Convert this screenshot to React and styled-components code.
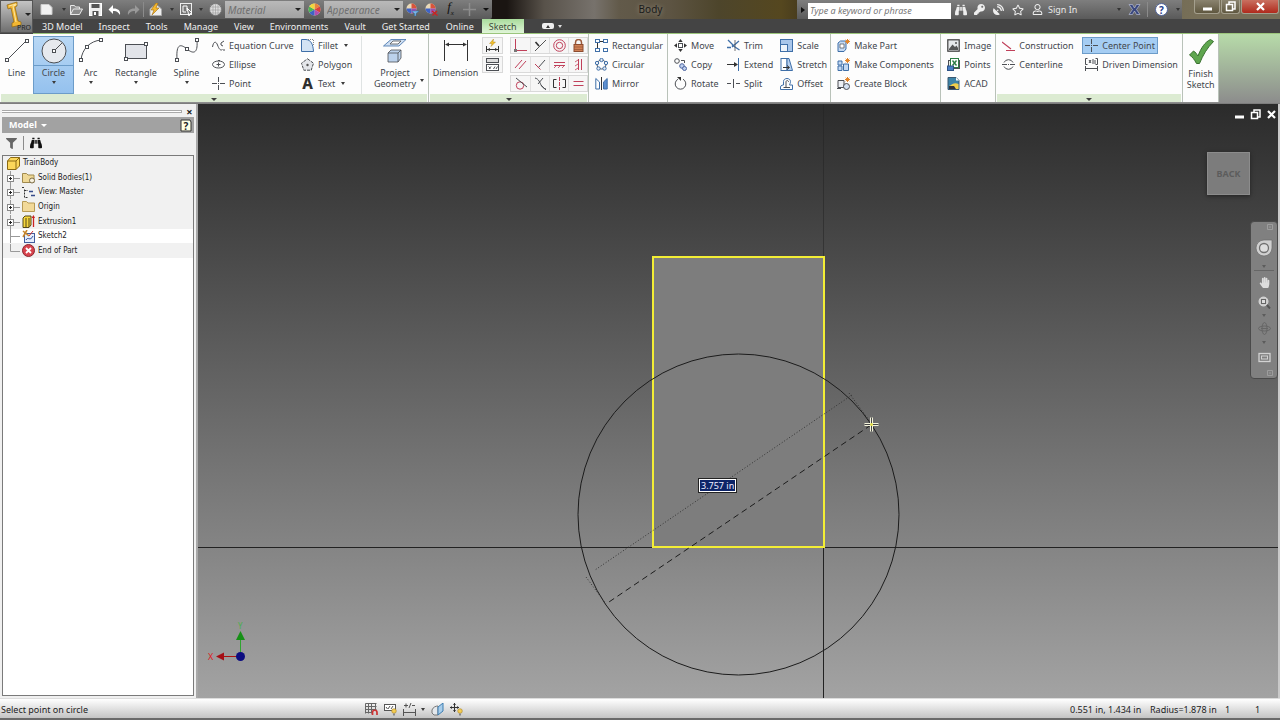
import React, { useState } from 'react'
import styled, { createGlobalStyle, css } from 'styled-components'
import { FaBinoculars, FaFilter, FaHandPaper, FaKey, FaRegStar, FaRegUser, FaSatelliteDish } from 'react-icons/fa'

const ink = '#4c4f54'
const blue = '#3f6fa8'
const red = '#c0405a'

// every drawing is [width, height, content]
const icons = {
  line: [26, 26, <g fill='#fff' stroke={ink}><path d='M4 21 22 3' /><rect x='1.5' y='20.5' width='3' height='3' /><rect x='21.5' y='1.5' width='3' height='3' /></g>],
  circle: [26, 26, <g fill='#fff' stroke={ink}><circle cx='13' cy='13' r='12' fill='#e6e9ee' /><path d='m13 13 8-8' /><rect x='11.5' y='11.5' width='3' height='3' /></g>],
  arc: [26, 26, <g fill='#fff' stroke={ink}><path d='M3 22C4 11 12 3 23 2' fill='none' /><rect x='1.5' y='20.5' width='3' height='3' /><rect x='7.5' y='7.5' width='3' height='3' /><rect x='21.5' y='.5' width='3' height='3' /></g>],
  rectangle: [26, 26, <g fill='#fff' stroke={ink}><rect x='2.5' y='6.5' width='21' height='14' fill='#e2e4e9' /><rect x='1.5' y='19.5' width='3' height='3' /><rect x='21.5' y='4.5' width='3' height='3' /></g>],
  spline: [26, 26, <g fill='#fff' stroke={ink}><path d='M3 21C2 5 7 6 13 11S24 16 23 3' fill='none' /><rect x='1.5' y='20.5' width='3' height='3' /><rect x='11.5' y='9.5' width='3' height='3' /><rect x='21.5' y='.5' width='3' height='3' /></g>],
  project: [26, 26, <g stroke={ink} strokeWidth='.8'><path d='M1.500 8 9 1.500h15L17 8z' fill='#cfdff2' stroke={blue} /><path d='m8 6 3-3h8l-3 3z' fill='#fff' /><path d='m6 15 3-3h10v8l-3 4H6z' fill='#bcd2ec' /><path d='M6 15h10v9M16 15l3-3' fill='none' /></g>],
  dimension: [26, 26, <g stroke='#333' fill='#333'><path d='M1.500 2v21M24.500 2v21M3 6.500h20' /><path d='m2 6.500 4-2v4zM24 6.500l-4-2v4z' stroke='none' /></g>],
  check: [28, 27, <path d='M2.500 17 6.500 13c2 1 3 3 4.500 5C14 10 18 4 23.500 1.500l3 2C20 10 16 17 12.500 25.500h-3C7.500 21.500 5 18.500 2.500 17z' fill='#5fa64f' stroke='#39702f' />],
  equation: [13, 13, <g fill='none' stroke={ink}><path d='M.5 8C1.500 2 4 2 5.500 6s3 6 5 4.500' /><path d='M12 2 9 4v2l2 1M12 10v2' /></g>],
  ellipse: [13, 13, <g fill='none' stroke={ink}><ellipse cx='6.500' cy='6.500' rx='6' ry='3.500' /><path d='M4.500 6.500h4M6.500 4.500v4M6 2.500h2' /></g>],
  point: [13, 13, <path d='M0 6.500h5M8 6.500h5M6.500 0v5M6.500 8v5M6 6.500h1' stroke={ink} />],
  fillet: [13, 13, <g><path d='M.5.5H5C10 1 12 5 12.500 12.500H.5z' fill='#d3e3f4' stroke={blue} /><path d='M7 .5h5.500V6' fill='none' stroke='#888' strokeDasharray='1 1' /></g>],
  polygon: [13, 13, <g><path d='m6.500.8 6 4.400-2.300 7H2.800l-2.300-7z' fill='#e4e6ea' stroke={ink} strokeDasharray='3 1' /><circle cx='6.500' cy='7' r='1.200' fill='#555' /></g>],
  text: [13, 13, <path d='M2 12.500 6.500 1.500l4.500 11M4 8.500h5' fill='none' stroke='#2e2e2e' strokeWidth='2' />],
  autoDim: [13, 13, <g><path d='m7.500 0-4 4.500h2.500L5 7.500l4.500-4.500H7z' fill='#f3c12b' stroke='#a97b10' strokeWidth='.4' /><path d='M.5 7v6M12.500 7v6M1 10.500h11' stroke='#333' /><path d='m1 10.500 3-1.500v3zM12 10.500 9 9v3z' fill='#333' /></g>],
  showCon: [13, 13, <g fill='#ddd' stroke={ink}><rect x='.5' y='.5' width='12' height='4' /><rect x='.5' y='6.500' width='12' height='6' fill='#fff' /><path d='m2.500 8.500 2 2M5 8.500l-2 2.500M7.500 11l1.500-2.500M10 11l1.500-2.500' /></g>],
  coincident: [13, 13, <g><path d='M1.500 0v11.500H13' fill='none' stroke={red} /><path d='M0 10h3v3H0z' fill='#777' /></g>],
  collinear: [13, 13, <g fill='none' stroke={ink}><path d='M1 12 12 1' stroke='#555' /><path d='m1.500 3 3.500 4' stroke='#333' strokeWidth='1.600' /></g>],
  concentric: [13, 13, <g fill='none' stroke={red}><circle cx='6.500' cy='6.500' r='5.800' /><circle cx='6.500' cy='6.500' r='3.200' /></g>],
  fix: [13, 13, <g><path d='M3.500 6V3.500a3 3 0 0 1 6 0V6' fill='none' stroke='#9b5b3c' strokeWidth='1.500' /><rect x='2' y='5.500' width='9' height='7' fill='#d08055' stroke='#8c4c30' /><path d='M2 8h9M2 10.500h9' stroke='#8c4c30' strokeWidth='.6' /></g>],
  parallel: [13, 13, <path d='M1 10 8 2M5 11l7-8' stroke={red} />],
  perpendicular: [13, 13, <g fill='none'><path d='m4 10 7-8' stroke={ink} /><path d='m1 6 5.500 5.500' stroke={red} /></g>],
  horizontal: [13, 13, <g stroke={red}><path d='M1 4.500h11M1 7.500h11' /><path d='m1 10 2-2M5 10l2-2M9 10l2-2' strokeWidth='.8' /></g>],
  vertical: [13, 13, <g stroke={red}><path d='M6.500 1v11M9.500 1v11' /><path d='m3 4 3-2M3 8l3-2M3 12l3-2' strokeWidth='.8' /></g>],
  tangent: [13, 13, <g fill='none'><circle cx='6' cy='8.500' r='3.700' stroke={red} /><path d='m2 1 11 9' stroke={ink} /></g>],
  smooth: [13, 13, <path d='M1 1c4 1 5 5 6 7s3 4 5 4M4 7l5-6M7 8l5 5' fill='none' stroke={ink} />],
  symmetric: [13, 13, <g fill='none'><path d='M3.500 2.500h-3v8h3M9.500 2.500h3v8h-3' stroke='#333' /><path d='M6.500 0v13' stroke={red} strokeDasharray='4 1' /></g>],
  equal: [13, 13, <path d='M1.500 4.500h10M1.500 8.500h10' stroke={red} />],
  rectangular: [13, 13, <g fill='#fff' stroke={blue}><path d='M2.500 2.500h8M2.500 2.500v8' stroke='#333' /><rect x='.5' y='.5' width='4' height='3' /><rect x='8.500' y='.5' width='4' height='3' /><rect x='.5' y='9.500' width='4' height='3' /><rect x='8.500' y='9.500' width='4' height='3' /></g>],
  circular: [13, 13, <g fill='#e8eef6' stroke={blue}><circle cx='6.500' cy='6.500' r='4.500' fill='none' stroke={ink} /><circle cx='6.500' cy='2' r='1.700' /><circle cx='2' cy='5' r='1.700' /><circle cx='11' cy='5' r='1.700' /><circle cx='3.500' cy='10.500' r='1.700' /><circle cx='9.500' cy='10.500' r='1.700' /></g>],
  mirror: [13, 13, <g><path d='M.8 1.500 4.500 5v7H.8z' fill='#fff' stroke={blue} /><path d='M12.200 1.500 8.500 5v7h3.700z' fill='#5e8fd0' stroke={blue} /><path d='M6.500 0v13' stroke='#333' /></g>],
  move: [13, 13, <g fill='#333'><rect x='4.500' y='4.500' width='4' height='4' fill='#fff' stroke={ink} /><path d='m6.500 0 2.200 3H4.300zM6.500 13l2.200-3H4.300zM0 6.500l3-2.200v4.400zM13 6.500l-3-2.200v4.400z' /></g>],
  copy: [13, 13, <g fill='#fff' stroke={ink}><circle cx='3' cy='3' r='2.300' /><path d='M7 2.500h3.500V5' fill='none' /><g fill='#bed0ee' stroke='#4d64a0'><circle cx='8' cy='8' r='2.300' /><circle cx='10.500' cy='10.500' r='2' /></g></g>],
  rotate: [13, 13, <g><path d='M9 2.200A5.300 5.300 0 1 1 4 2.200' fill='none' stroke={ink} /><path d='M3 0h4v4z' fill='#333' /></g>],
  trim: [13, 13, <g fill='none' stroke={blue}><path d='m1 1 6 6M0 8.500h4M12 2 5 8M12.500 11 5 6' strokeWidth='1.300' /><path d='M8 1v11' stroke={ink} strokeWidth='.8' /></g>],
  extend: [13, 13, <g><path d='M0 6.500h8' stroke='#333' /><path d='M11.500 0v13' stroke={blue} /><path d='m7 4 4 2.500L7 9z' fill='#333' /></g>],
  split: [13, 13, <path d='M0 6.500h4M9 6.500h4M6.500 2v9' stroke={ink} />],
  scale: [13, 13, <g stroke={blue}><rect x='.5' y='.5' width='12' height='12' fill='#a9c6ea' /><rect x='.5' y='5.500' width='7' height='7' fill='#eef3fa' /></g>],
  stretch: [13, 13, <g><rect x='1' y='.5' width='6' height='12' fill='#fff' stroke={blue} /><path d='M7 .5h2l3.500 12H7z' fill='#b8d0ee' stroke={blue} /><path d='M3 9.500h6M7 7.500l2.500 2L7 11.500' stroke='#333' fill='none' /></g>],
  offset: [13, 13, <g fill='none' stroke={blue}><path d='M.5 12.500V10c0-2 3-2 3-2V4.500C3.500.5 10.500.5 10.500 4.500c0 2-1 2.500-1 3.500h3v4.500z' /><path d='M3.500 10.500H10M6 10V5c0-2 2.500-2 2.500 0' stroke={ink} /></g>],
  makePart: [13, 13, <g><path d='M1 4 3.500 2H9v8l-2 2.500H1z' fill='#c4d9f2' stroke={blue} /><path d='M3 5h4v4H3z' fill='#fff' stroke={ink} strokeWidth='.7' /><path d='M10.500 0v5M8 2.500h5M8.700.8l3.600 3.400M12.300.8 8.700 4.200' stroke='#e2852b' /></g>],
  makeComp: [13, 13, <g><path d='M1 3h4v4H1zM1 8h4v4.500H1zM6.500 6h5v6.500h-5z' fill='#c4d9f2' stroke={blue} /><path d='M10.500 0v5M8 2.500h5M8.700.8l3.600 3.400M12.300.8 8.700 4.200' stroke='#e2852b' /></g>],
  block: [13, 13, <g fill='#eceff4' stroke={ink}><path d='M1 3.500h6v7H1z' /><circle cx='9.500' cy='9.500' r='3' fill='#d5e2f3' /><path d='M0 11.500h4' /><path d='M10.500 0v5M8 2.500h5M8.700.8l3.600 3.400M12.300.8 8.700 4.200' stroke='#e2852b' /></g>],
  image: [13, 13, <g><rect x='.8' y='.8' width='11.400' height='11.400' fill='#e6e8ea' stroke='#3d3d3d' strokeWidth='1.200' /><path d='m2 10 3.500-4.500L8 8l1.500-1.500L11 9v2H2z' fill='#555' /><circle cx='9' cy='4' r='1' fill='#555' /></g>],
  points: [13, 13, <g><rect x='1.500' y='2.500' width='11' height='8' fill='#e7efe7' stroke={ink} /><rect x='3.500' y='.5' width='8' height='9' fill='#fff' stroke='#2d7d45' /><path d='m5.500 2.500 4 5M9.500 2.500l-4 5' stroke='#2d7d45' strokeWidth='1.400' /><rect x='.5' y='8' width='6' height='4.500' fill='#4a7fc4' stroke='#2f5488' /></g>],
  acad: [13, 13, <g><path d='M1 .5h8l3 3v9H1z' fill='#3d84a8' stroke='#3b5871' /><path d='M9 .5v3h3' fill='#fff' /><path d='M2 9c3-1 5-4 9.500-2v5H2z' fill='#f2cf4b' /><path d='M2 9h5l2 3H2z' fill='#33333a' /></g>],
  construction: [13, 13, <path d='m0 3 9 7M4 11.500h9' stroke={red} strokeWidth='1.100' />],
  centerline: [13, 13, <g fill='none' stroke={ink}><path d='M2 4.500A5 5 0 0 1 11 4.500M2 8.500a5 5 0 0 0 9 0' /><path d='M0 6.500h5M6 6.500h1M8 6.500h5' /></g>],
  driven: [13, 13, <g fill='none' stroke={ink}><path d='M2.500.5h-2v6h2M10.500.5h2v6h-2M4 2l2 3M6 2 4 5M8 1v5M10 2v4' /><path d='M.5 8v5M12.500 8v5M1 10.500h11' /></g>],
  file: [13, 13, <path d='M1 1.500h8l3 3v7H1z' fill='#f1f1f1' stroke='#ccc' />],
  folderOpen: [13, 13, <path d='M.5 11.500v-9h4l1 1.500h4v2M.5 11.500 3.500 6h9l-3 5.500z' fill='#8b8b8b' stroke='#e8e8e8' />],
  save: [13, 13, <g><rect x='.5' y='.5' width='12' height='12' fill='#eee' stroke='#fff' /><path d='M2.500 1h8v4h-8zM3.500 8h6v5h-6z' fill='#555' /><path d='M5 9h2v3H5z' fill='#fff' /></g>],
  undo: [13, 13, <path d='M12 12c1-5-3-7-7-6.500V2L.5 6.500 5 11V8c3-.5 5 .5 7 4z' fill='#fff' />],
  redo: [13, 13, <path d='M1 12C0 7 4 5 8 5.500V2l4.500 4.500L8 11V8c-3-.5-5 .5-7 4z' fill='#999' />],
  update: [13, 13, <g><path d='m1 6 6-5 5.500 5v6.500H1z' fill='#eee' stroke='#aaa' /><path d='M7 0 2 7h3l-2 5 7-7H7l2-5z' fill='#f5b82e' stroke='#9c6a12' strokeWidth='.6' /></g>],
  selectTool: [13, 13, <g><rect x='.5' y='.5' width='11' height='11' fill='#777' stroke='#eee' /><path d='M3 3h4v5M3 3v6h3M7 5l5 5-2 .5-1 2.500z' fill='none' stroke='#fff' /></g>],
  globe: [13, 13, <g><circle cx='6.500' cy='6.500' r='6' fill='#dedede' stroke='#777' /><path d='M2 4h9M1 7h11M2 10h9M4 1.500v10M6.500 1v11M9 1.500v10' stroke='#999' strokeWidth='.6' /></g>],
  wheel: [13, 13, <g><circle cx='6.500' cy='6.500' r='6' fill='#e8e3d6' /><path d='M6.500 6.500V.5a6 6 0 0 1 5.200 3z' fill='#e8853a' /><path d='m6.500 6.500 5.200-3a6 6 0 0 1 0 6z' fill='#d8403a' /><path d='m6.500 6.500 5.200 3a6 6 0 0 1-5.200 3z' fill='#b34fb0' /><path d='M6.500 6.500v6a6 6 0 0 1-5.200-3z' fill='#3e63c6' /><path d='m6.500 6.500-5.200 3a6 6 0 0 1 0-6z' fill='#4db556' /><path d='m6.500 6.500-5.200-3a6 6 0 0 1 5.200-3z' fill='#f0d63c' /></g>],
  adjust: [13, 13, <g><circle cx='5.500' cy='5.500' r='5' fill='#e9d9b8' /><path d='M5.500 5.500v-5a5 5 0 0 1 5 5z' fill='#d9543a' /><path d='M5.500 5.500h-5a5 5 0 0 0 5 5z' fill='#3e63c6' /><path d='M5.500 5.500h5a5 5 0 0 1-5 5z' fill='#9a4fb0' /><path d='M5.500 8h7.500l-3 2.500V13H8.500v-2.500z' fill='#7db8e8' stroke='#2f6ca8' strokeWidth='.5' /></g>],
  clear: [13, 13, <g><circle cx='5.500' cy='5.500' r='5' fill='#e9d9b8' /><path d='M5.500 5.500v-5a5 5 0 0 1 5 5z' fill='#d9543a' /><path d='M5.500 5.500h-5a5 5 0 0 0 5 5z' fill='#3e63c6' /><path d='M5.500 5.500h5a5 5 0 0 1-5 5z' fill='#9a4fb0' /><path d='m7 8 5.500 4.500M12 8l-4.500 4.500' stroke='#c22' strokeWidth='1.400' /></g>],
  plus: [13, 13, <path d='M6.500 0v13M0 6.500h13' stroke='#8d8d8d' strokeWidth='1.500' />],
  exchange: [13, 13, <path d='M1 1.500h3.500L6.500 5l2-3.500H12L8.500 6.500 12 11.500H8.500L6.500 8l-2 3.500H1l3.500-5z' fill='#39477e' stroke='#c6cbe0' strokeWidth='.6' />],
  help: [13, 13, <g><circle cx='6.500' cy='6.500' r='6' fill='#fff' stroke='#51639a' /><text x='6.500' y='10.500' textAnchor='middle' fontFamily='Noto Sans, sans-serif' fontWeight='700' fontSize='10' fill='#26408c'>?</text></g>],
  min: [13, 13, <path d='M2 7.500h9v3H2z' fill='#fff' />],
  max: [13, 13, <path d='M5 4V2h6v7H9M2.500 4.500h6v6h-6z' fill='none' stroke='#fff' strokeWidth='1.500' />],
  close: [13, 13, <path d='m3 3 7 7M10 3l-7 7' stroke='#fff' strokeWidth='2.200' />],
  part: [13, 13, <g fill='#fcd75a' stroke='#8c6a12'><path d='m.5 4 3-3.500h9V9L9 12.500H.5z' /><path d='M.5 4H9v8.500M9 4l3.500-3.500' fill='none' /></g>],
  bodies: [13, 13, <g><path d='M.5 11.500v-9h4L6 4h6v7.500z' fill='#efd896' stroke='#a08a4f' /><circle cx='10' cy='9.500' r='2.500' fill='#f7f1df' stroke='#7c6d47' /></g>],
  view: [13, 13, <g fill='none' stroke='#333'><path d='M0 1.500h3M2.500 3.500v8H6M2.500 4.500H6' strokeDasharray='2 1' /><path d='M7 5.500h4M9 9.500h4' stroke='#364a8a' strokeWidth='1.500' /></g>],
  folder: [13, 13, <path d='M.5 11.500v-10h4L6 3h6.500v8.500z' fill='#f2d999' stroke='#b79a55' />],
  extrusion: [13, 13, <g><path d='m1 3 2-2h6v9l-2 2.500H1z' fill='#f6d63c' stroke='#54481a' /><path d='M4 3v9.500M7 3v9' stroke='#54481a' /><path d='M11.500 12V2' stroke='#c22' strokeWidth='1.300' /><path d='m9.500 3 2-3 1.500 3z' fill='#c22' /></g>],
  sketch: [13, 13, <g><rect x='2.500' y='3.500' width='10' height='9' fill='#e7eefb' stroke='#425d9c' /><path d='M4 10c2-4 4 2 7-4' fill='none' stroke='#2c4da0' /><path d='m1 1 6 5M5 0 1 7' stroke='#c8862b' strokeWidth='1.600' /><path d='m7 6 4-5' stroke='#c33' /></g>],
  end: [13, 13, <g><circle cx='6.500' cy='6.500' r='6' fill='#d8434d' stroke='#8b2730' /><path d='m4 4 5 5M9 4 4 9' stroke='#fff' strokeWidth='1.800' /></g>],
  grid: [13, 13, <g fill='none'><path d='M.5.500h11M.5 3.500h11M.5 6.500h11M.5 9.500h6M.500.5v10M3.500.5v10M6.500.5v10M10.500.5v6' stroke='#666' /><path d='M7.500 12V9.500a2.200 2.200 0 0 1 4.500 0V12' stroke='#c33' strokeWidth='1.700' /></g>],
  constraintBulb: [13, 13, <g><rect x='.5' y='1.500' width='11' height='6' fill='#fff' stroke='#555' /><path d='m2 4 1.500 2M4 6l2-3M7 6l2-3' stroke='#555' /><circle cx='10' cy='8' r='2.300' fill='#f4cd52' stroke='#a98222' strokeWidth='.6' /><path d='M9 10.500h2v2H9z' fill='#888' /></g>],
  tolerance: [13, 13, <g stroke='#555'><path d='M.5 6v7M12.500 6v7M1 9.500h11M1 2.500h4M3 .5v4M6 5l2-5M9 2.500h3' /></g>],
  slice: [13, 13, <g><path d='M1 10V7c1-3 4-4 6-4v9H3z' fill='#e4e8ec' stroke='#777' /><path d='m7 4 5-4v8l-5 4z' fill='#a8cdea' stroke='#3c7cb0' /></g>],
  dof: [13, 13, <g><path d='M4.500 0v9M0 4.500h9' stroke='#333' /><path d='m4.500 0 1.500 2H3zM4.500 9 6 7H3zM0 4.500 2 3v3zM9 4.500 7 3v3z' fill='#333' /><circle cx='10' cy='8' r='2.300' fill='#f4cd52' stroke='#a98222' strokeWidth='.6' /><path d='M9 10.500h2v2H9z' fill='#888' /></g>],
  steering: [18, 18, <g><path d='M9 1h8v8a8 8 0 1 1-8-8z' fill='#cfcfcf' stroke='#6a6a6a' strokeWidth='.7' /><circle cx='9' cy='9' r='4.500' fill='#ddd' stroke='#707070' strokeWidth='1.300' /></g>],
  zoomTool: [13, 13, <g><path d='m8 8 4 4.500' stroke='#555' strokeWidth='2' /><circle cx='5.500' cy='5.500' r='4.500' fill='#ccc' stroke='#d8d8d8' /><rect x='3.500' y='3.500' width='4' height='4' fill='#ddd' stroke='#666' /></g>],
  orbit: [13, 13, <g fill='none' stroke='#666'><ellipse cx='6.500' cy='6.500' rx='6' ry='2.500' /><ellipse cx='6.500' cy='6.500' rx='2.500' ry='6' /><path d='M3 6.500h7' /></g>],
  lookAt: [13, 13, <g fill='none' stroke='#d2d2d2'><rect x='1' y='2.500' width='11' height='8' strokeWidth='1.300' /><rect x='3.500' y='5' width='6' height='3' /></g>],
  dot: [6, 6, <path d='M.5.500h5v5h-5zM2 3h2' fill='none' stroke='#a5a5a5' strokeWidth='.8' />],
  helpBox: [12, 13, <g><path d='M1 1h9l1 2v9H1z' fill='#ffffe4' stroke='#333' /><text x='6' y='10.500' textAnchor='middle' fontFamily='Noto Sans, sans-serif' fontWeight='700' fontSize='10' fill='#222'>?</text></g>],
}

function Icon({ name }) {
  if (name === 'text') return <LetterIcon>A</LetterIcon>
  const [w, h, body] = icons[name]
  return <IconSvg width={w} height={h} viewBox={`0 0 ${w} ${h}`} fill='none' aria-hidden='true'>{body}</IconSvg>
}

function Caret({ color = '#3c3c3c', size = 5 }) {
  return <IconSvg width={size} height='3' viewBox='0 0 6 3' preserveAspectRatio='none'><path d='M0 0h6L3 3z' fill={color} /></IconSvg>
}

const tabs = ['3D Model', 'Inspect', 'Tools', 'Manage', 'View', 'Environments', 'Vault', 'Get Started', 'Online', 'Sketch']

const drawTools = [
  { label: 'Line', icon: 'line', width: 33 },
  { label: 'Circle', icon: 'circle', width: 41, caret: true, active: true },
  { label: 'Arc', icon: 'arc', width: 33, caret: true },
  { label: 'Rectangle', icon: 'rectangle', width: 58, caret: true },
  { label: 'Spline', icon: 'spline', width: 43, caret: true },
]

const constraints = [
  ['coincident', 'collinear', 'concentric', 'fix'],
  ['parallel', 'perpendicular', 'horizontal', 'vertical'],
  ['tangent', 'smooth', 'symmetric', 'equal'],
]

const tree = [
  { label: 'Solid Bodies(1)', icon: 'bodies', open: true },
  { label: 'View: Master', icon: 'view', open: true },
  { label: 'Origin', icon: 'folder', open: true },
  { label: 'Extrusion1', icon: 'extrusion', open: true },
  { label: 'Sketch2', icon: 'sketch', active: true },
  { label: 'End of Part', icon: 'end', last: true },
]

function ToolColumn({ items, width, active }) {
  return (
    <Column $width={width}>
      {items.map(([label, icon, caret]) => (
        <SmallTool key={label} $active={label === active}>
          <Icon name={icon} />
          <span>{label}</span>
          {caret && <Caret size={4} />}
        </SmallTool>
      ))}
    </Column>
  )
}

function QuickAccess() {
  return (
    <QuickBar>
      <QuickButton $width={27} aria-label='New'><Icon name='file' /></QuickButton>
      <QuickButton $width={7} aria-label='New options'><Caret color='#333' size={4} /></QuickButton>
      <QuickButton aria-label='Open'><Icon name='folderOpen' /></QuickButton>
      <QuickButton aria-label='Save'><Icon name='save' /></QuickButton>
      <QuickButton aria-label='Undo'><Icon name='undo' /></QuickButton>
      <QuickButton aria-label='Redo'><Icon name='redo' /></QuickButton>
      <Divider $dark />
      <QuickButton $width={23} aria-label='Update'><Icon name='update' /></QuickButton>
      <QuickButton $width={9} aria-label='Update options'><Caret color='#333' size={4} /></QuickButton>
      <QuickButton $width={21} aria-label='Select'><Icon name='selectTool' /></QuickButton>
      <QuickButton $width={8} aria-label='Select options'><Caret color='#333' size={4} /></QuickButton>
      <QuickButton $width={20} aria-label='Team web'><Icon name='globe' /></QuickButton>
      <Combo><select aria-label='Material'><option>Material</option></select><Caret size={6} color='#222' /></Combo>
      <QuickButton $width={20} aria-label='Material color'><Icon name='wheel' /></QuickButton>
      <Combo><select aria-label='Appearance'><option>Appearance</option></select><Caret size={6} color='#222' /></Combo>
      <QuickButton aria-label='Adjust'><Icon name='adjust' /></QuickButton>
      <QuickButton aria-label='Clear'><Icon name='clear' /></QuickButton>
      <QuickButton aria-label='Parameters'><Fx>f<sub>x</sub></Fx></QuickButton>
      <QuickButton aria-label='Add'><Icon name='plus' /></QuickButton>
      <QuickButton $width={13} aria-label='Customize'><Caret size={6} color='#111' /></QuickButton>
    </QuickBar>
  )
}

function Ribbon() {
  return (
    <RibbonBar>
      <Panel>
        <PanelBody>
          {drawTools.map(t => (
            <BigTool key={t.label} $width={t.width} $active={t.active}>
              <Icon name={t.icon} />
              <BigLabel $split={t.active}>{t.label}</BigLabel>
              {t.caret && <Caret size={4} />}
            </BigTool>
          ))}
          <ToolColumn width={89} items={[['Equation Curve', 'equation'], ['Ellipse', 'ellipse'], ['Point', 'point']]} />
          <ToolColumn width={64} items={[['Fillet', 'fillet', true], ['Polygon', 'polygon'], ['Text', 'text', true]]} />
          <Divider />
          <BigTool $width={66}>
            <Icon name='project' />
            <BigLabel>Project<br />Geometry</BigLabel>
            <CornerCaret><Caret size={4} /></CornerCaret>
          </BigTool>
        </PanelBody>
        <PanelFoot><Caret size={6} /></PanelFoot>
      </Panel>
      <Panel>
        <PanelBody>
          <BigTool $width={53}>
            <Icon name='dimension' />
            <BigLabel>Dimension</BigLabel>
          </BigTool>
          <BoxStack>
            <BoxRow><BoxTool aria-label='Auto dimension'><Icon name='autoDim' /></BoxTool></BoxRow>
            <BoxRow><BoxTool aria-label='Show constraints'><Icon name='showCon' /></BoxTool></BoxRow>
          </BoxStack>
          <BoxStack>
            {constraints.map(row => (
              <BoxRow key={row[0]}>
                {row.map(name => <BoxTool key={name} aria-label={name}><Icon name={name} /></BoxTool>)}
              </BoxRow>
            ))}
          </BoxStack>
        </PanelBody>
        <PanelFoot><Caret size={6} /></PanelFoot>
      </Panel>
      <Panel>
        <PanelBody>
          <ToolColumn width={78} items={[['Rectangular', 'rectangular'], ['Circular', 'circular'], ['Mirror', 'mirror']]} />
        </PanelBody>
      </Panel>
      <Panel>
        <PanelBody>
          <ToolColumn width={53} items={[['Move', 'move'], ['Copy', 'copy'], ['Rotate', 'rotate']]} />
          <ToolColumn width={53} items={[['Trim', 'trim'], ['Extend', 'extend'], ['Split', 'split']]} />
          <ToolColumn width={56} items={[['Scale', 'scale'], ['Stretch', 'stretch'], ['Offset', 'offset']]} />
        </PanelBody>
      </Panel>
      <Panel>
        <PanelBody>
          <ToolColumn width={109} items={[['Make Part', 'makePart'], ['Make Components', 'makeComp'], ['Create Block', 'block']]} />
        </PanelBody>
      </Panel>
      <Panel>
        <PanelBody>
          <ToolColumn width={54} items={[['Image', 'image'], ['Points', 'points'], ['ACAD', 'acad']]} />
        </PanelBody>
      </Panel>
      <Panel>
        <PanelBody>
          <ToolColumn width={83} items={[['Construction', 'construction'], ['Centerline', 'centerline']]} />
          <ToolColumn width={103} active='Center Point' items={[['Center Point', 'point'], ['Driven Dimension', 'driven']]} />
        </PanelBody>
        <PanelFoot><Caret size={6} /></PanelFoot>
      </Panel>
      <Panel>
        <PanelBody>
          <BigTool $width={35}>
            <Icon name='check' />
            <BigLabel>Finish<br />Sketch</BigLabel>
          </BigTool>
        </PanelBody>
      </Panel>
    </RibbonBar>
  )
}

function Browser() {
  return (
    <Sidebar>
      <Grip><span /><button aria-label='Close browser'>×</button></Grip>
      <BrowserHead>
        <button>Model <Caret size={6} color='#fff' /></button>
        <Icon name='helpBox' />
      </BrowserHead>
      <BrowserTools>
        <button aria-label='Filter'><FaFilter color='#666' size={11} /></button>
        <Divider $dark />
        <button aria-label='Find'><FaBinoculars color='#111' size={12} /></button>
      </BrowserTools>
      <TreeBox>
        <TreeRows>
          <TreeRow $root><Icon name='part' />TrainBody</TreeRow>
          {tree.map(n => (
            <TreeRow key={n.label} $active={n.active}>
              <Branch width='18' height='14' viewBox='0 0 18 14' fill='none'>
                <path d={n.last ? 'M6.500 0v7.500H16' : 'M6.500 0v14M7 7.500h9'} stroke='#999' />
                {n.open && <g><rect x='3.500' y='4.500' width='6' height='6' fill='#fff' stroke='#888' /><path d='M5 7.500h3M6.500 6v3' stroke='#222' /></g>}
              </Branch>
              <Icon name={n.icon} />{n.label}
            </TreeRow>
          ))}
        </TreeRows>
      </TreeBox>
    </Sidebar>
  )
}

function Viewport() {
  const [diameter, setDiameter] = useState('3.757 in')

  return (
    <Canvas>
      <Drawing viewBox='198 104 1080 594' preserveAspectRatio='xMidYMid slice' fill='none'>
        <rect x='653' y='257' width='171' height='290' fill='#7d7d7d' />
        <path d='M198 547.500h1080M823.500 547v151' stroke='#222' />
        <path d='M823.500 104v153' stroke='#222' strokeOpacity='.5' />
        <rect x='653' y='257' width='171' height='290' stroke='#f3ee35' strokeWidth='2' />
        <circle cx='738.500' cy='514.500' r='160.500' stroke='#1c1c1c' />
        <path d='M871 425 606 604' stroke='#1c1c1c' strokeDasharray='6 4' />
        <path d='M852 395 595 570' stroke='#333' strokeDasharray='1 2' />
        <path d='m849 393 22 30M586 577l20 27' stroke='#333' strokeDasharray='1 2' />
        <path d='M864.500 424.500h14M871.500 417.500v14' stroke='#f4f4dc' strokeWidth='3' />
        <path d='M864.500 424.500h14M871.500 417.500v14' stroke='#444' />
        <circle cx='871.500' cy='424.500' r='1.500' fill='#e6e34a' />
        <path d='M240.500 656v-20' stroke='#2fa52f' />
        <path d='m240.500 631 4.500 9h-9z' fill='#169016' />
        <path d='M240 656.500h-20' stroke='#a11' />
        <path d='m216 656.500 8-4v8z' fill='#a50f16' />
        <circle cx='240.500' cy='656.500' r='4.500' fill='#0c0c80' />
        <text x='208' y='660' fontFamily='Noto Sans, sans-serif' fontSize='9' fill='#d22'>X</text>
        <text x='238' y='629' fontFamily='Noto Sans, sans-serif' fontSize='8' fill='#4bb04b'>Y</text>
      </Drawing>
      <DimensionInput aria-label='Diameter' value={diameter} onChange={e => setDiameter(e.target.value)} />
      <DocButtons>
        <button aria-label='Minimize document'><Icon name='min' /></button>
        <button aria-label='Restore document'><Icon name='max' /></button>
        <button aria-label='Close document'><Icon name='close' /></button>
      </DocButtons>
      <ViewCube>BACK</ViewCube>
      <NavBar>
        <NavItem $height={10} $end aria-label='Close navigation bar'><Icon name='dot' /></NavItem>
        <NavItem $height={31} aria-label='Steering wheel'><Icon name='steering' /></NavItem>
        <NavItem $height={7} aria-label='Wheel options'><Caret color='#5c5c5c' size={4} /></NavItem>
        <hr />
        <NavItem $height={22} aria-label='Pan'><FaHandPaper color='#ddd' size={11} /></NavItem>
        <NavItem $height={18} aria-label='Zoom'><Icon name='zoomTool' /></NavItem>
        <NavItem $height={8} aria-label='Zoom options'><Caret color='#5c5c5c' size={4} /></NavItem>
        <NavItem $height={18} aria-label='Orbit'><Icon name='orbit' /></NavItem>
        <NavItem $height={10} aria-label='Orbit options'><Caret color='#5c5c5c' size={4} /></NavItem>
        <NavItem $height={21} aria-label='Look at'><Icon name='lookAt' /></NavItem>
        <NavItem $height={10} $end aria-label='Navigation bar options'><Icon name='dot' /></NavItem>
      </NavBar>
    </Canvas>
  )
}

export default function App() {
  const [tab, setTab] = useState('Sketch')

  return (
    <Page>
      <GlobalStyle />
      <Header>
        <AppButton aria-label='Application menu'>
          <svg width='18' height='28' viewBox='0 0 18 28'>
            <path d='M2 4 12 1v4l-2 1 3 14 3 1v3L7 26v-4l2-1L6 7 3 8z' fill='#f2b632' stroke='#8d6412' strokeWidth='.7' />
            <path d='M4 5 11 3v1L8 5l3 16' fill='none' stroke='#fbe7a4' />
          </svg>
          <Caret size={6} color='#222' />
          <span>PRO</span>
        </AppButton>
        <HeaderRows>
          <TitleBar>
            <QuickAccess />
            <Title>Body</Title>
            <InfoBar>
              <QuickButton $width={11} aria-label='Toggle search'><svg width='4' height='6' viewBox='0 0 4 6'><path d='M0 0v6l4-3z' fill='#111' /></svg></QuickButton>
              <input type='search' aria-label='Search help' placeholder='Type a keyword or phrase' />
              <QuickButton aria-label='Search'><FaBinoculars color='#eee' size={12} /></QuickButton>
              <QuickButton aria-label='Subscription'><FaKey color='#eee' size={11} /></QuickButton>
              <QuickButton aria-label='Communication'><FaSatelliteDish color='#eee' size={11} /></QuickButton>
              <QuickButton aria-label='Favorites'><FaRegStar color='#eee' size={12} /></QuickButton>
              <SignIn><FaRegUser color='#eee' size={11} />Sign In<Caret color='#333' size={4} /></SignIn>
              <QuickButton $width={26} aria-label='Exchange apps'><Icon name='exchange' /></QuickButton>
              <Divider $dark />
              <QuickButton $width={26} aria-label='Help'><Icon name='help' /></QuickButton>
              <QuickButton $width={8} aria-label='Help options'><Caret color='#333' size={4} /></QuickButton>
            </InfoBar>
            <WindowButtons>
              <WindowButton $width={26} aria-label='Minimize'><Icon name='min' /></WindowButton>
              <WindowButton $width={19} aria-label='Restore'><Icon name='max' /></WindowButton>
              <WindowButton $width={38} $close aria-label='Close'><Icon name='close' /></WindowButton>
            </WindowButtons>
          </TitleBar>
          <TabRow>
            {tabs.map(t => <Tab key={t} $active={t === tab} onClick={() => setTab(t)}>{t}</Tab>)}
            <Collapse aria-label='Minimize ribbon'><span><Caret color='#333' size={4} /></span><Caret color='#ddd' size={4} /></Collapse>
          </TabRow>
        </HeaderRows>
      </Header>
      <Ribbon />
      <Main>
        <Browser />
        <Viewport />
      </Main>
      <StatusBar>
        <span>Select point on circle</span>
        <StatusTools>
          <button aria-label='Snap to grid'><Icon name='grid' /></button>
          <button aria-label='Show all constraints'><Icon name='constraintBulb' /></button>
          <button aria-label='Dimension display'><Icon name='tolerance' /><Caret size={4} /></button>
          <button aria-label='Slice graphics'><Icon name='slice' /></button>
          <button aria-label='Show degrees of freedom'><Icon name='dof' /></button>
        </StatusTools>
        <Readout $width={80}>0.551 in, 1.434 in</Readout>
        <Readout $width={75}>Radius=1.878 in</Readout>
        <Readout $width={30}>1</Readout>
        <Readout $width={25}>1</Readout>
      </StatusBar>
    </Page>
  )
}

const GlobalStyle = createGlobalStyle`
  * {
    box-sizing: border-box;
  }
  body {
    margin: 0;
  }
  button, input, select {
    font: inherit;
    color: inherit;
    border: none;
    background: none;
    padding: 0;
    margin: 0;
    outline: none;
  }
`

const Page = styled.div`
  display: flex;
  flex-direction: column;
  min-height: 100vh;
  background: #6a6a6a;
  color: #43474d;
  font: 9px/12px 'Noto Sans', sans-serif;
`

const IconSvg = styled.svg`
  display: block;
  flex: none;
`

const LetterIcon = styled.b`
  width: 13px;
  color: #2e2e2e;
  font-size: 15px;
  font-weight: 800;
  line-height: 17px;
  text-align: center;
`

const Divider = styled.i`
  flex: none;
  align-self: stretch;
  width: 1px;
  margin: ${p => p.$dark ? '2px 0' : '0'};
  background: ${p => p.$dark ? '#8b8b8b' : '#dfe3e3'};
`

const Header = styled.header`
  display: flex;
  background: #444;
`

const AppButton = styled.button`
  position: relative;
  display: flex;
  align-items: center;
  gap: 2px;
  width: 33px;
  height: 33px;
  padding: 0 0 4px 4px;
  border: 1px solid #555;
  background: linear-gradient(#c4c4c4, #6f6f6f);
  & span {
    position: absolute;
    right: 1px;
    bottom: -1px;
    color: #222;
    font-size: 7px;
    line-height: 10px;
  }
`

const HeaderRows = styled.div`
  flex: 1;
  min-width: 0;
`

const TitleBar = styled.div`
  display: flex;
  height: 19px;
  background: linear-gradient(90deg, #1a1512 38%, #58524a 41%, #77726c 45%, #625a4a 47%, #5d5443 51%, #4d452b 55%, #55471f 60%, #39301b 63%, #776f58 93%);
`

const barFill = css`
  background: linear-gradient(#7e7e7e, #5a5a5a);
`

const QuickBar = styled.div`
  ${barFill}
  display: flex;
  align-items: center;
  border-radius: 0 0 2px 0;
`

const QuickButton = styled.button`
  display: flex;
  align-items: center;
  justify-content: center;
  width: ${p => p.$width || 19}px;
  height: 19px;
`

const Combo = styled.label`
  display: flex;
  align-items: center;
  width: 79px;
  height: 17px;
  padding: 0 3px;
  background: linear-gradient(#b9b9b9, #a2a2a2);
  & select {
    flex: 1;
    min-width: 0;
    appearance: none;
    color: #707070;
    font-size: 10px;
    font-style: italic;
  }
`

const Fx = styled.span`
  color: #111;
  font: italic 13px/14px 'Liberation Serif', serif;
  & sub {
    font-size: 7px;
  }
`

const Title = styled.div`
  flex: 1;
  padding-left: 12px;
  color: #1a1a1a;
  font-size: 10px;
  line-height: 19px;
  text-align: center;
  text-shadow: 0 0 5px #a09a8c;
`

const InfoBar = styled.div`
  ${barFill}
  display: flex;
  align-items: center;
  width: 385px;
  & input {
    width: 143px;
    height: 16px;
    padding: 0 2px;
    background: #fff;
    font-style: italic;
    margin-top: 2px;
  }
  & input::placeholder {
    color: #777;
    opacity: 1;
  }
`

const SignIn = styled.button`
  display: flex;
  align-items: center;
  flex: 1;
  gap: 5px;
  padding-left: 5px;
  color: #e8e8e8;
  & svg:last-child {
    margin-left: auto;
  }
`

const WindowButtons = styled.div`
  display: flex;
  align-items: flex-start;
  gap: 1px;
  width: 98px;
  padding: 0 1px 0 12px;
`

const WindowButton = styled.button`
  display: flex;
  align-items: center;
  justify-content: center;
  width: ${p => p.$width}px;
  height: 14px;
  border: 1px solid #a49f8d;
  border-top: none;
  border-radius: 0 0 3px 3px;
  background: ${p => p.$close ? 'linear-gradient(#c97060, #b02a1c)' : 'linear-gradient(#8a836f, #5f573f)'};
`

const TabRow = styled.nav`
  display: flex;
  align-items: flex-end;
  height: 15px;
  padding-left: 1px;
  border-bottom: 1px solid #9bc57c;
`

const Tab = styled.button`
  height: 14px;
  padding: 1px ${p => p.$active ? 7 : 8}px 0;
  color: ${p => p.$active ? '#3d4a38' : '#efefef'};
  background: ${p => p.$active ? 'linear-gradient(#a9dc9c, #e0f5d8)' : 'none'};
`

const Collapse = styled.button`
  display: flex;
  align-items: center;
  gap: 4px;
  height: 14px;
  margin-left: 18px;
  & span {
    padding: 1px 4px 2px;
    border-radius: 2px;
    background: #eee;
    transform: rotate(180deg);
  }
`

const RibbonBar = styled.div`
  display: flex;
  height: 70px;
  padding-bottom: 1px;
  border-bottom: 1px solid #7d7d7d;
  background: linear-gradient(#b7dba9, #8c8c8c);
`

const Panel = styled.section`
  display: flex;
  flex-direction: column;
  background: #fdfdfd;
  border-right: 1px solid #b9c2b9;
`

const PanelBody = styled.div`
  display: flex;
  flex: 1;
  padding-top: 2px;
`

const PanelFoot = styled.button`
  display: flex;
  align-items: center;
  justify-content: center;
  height: 8px;
  margin: 0 1px;
  padding-top: 2px;
  background: #dcebd2;
`

const BigTool = styled.button`
  position: relative;
  display: flex;
  flex-direction: column;
  align-items: center;
  width: ${p => p.$width}px;
  height: 58px;
  padding-top: 2px;
  ${p => p.$active && css`
    background: linear-gradient(#b9d8f5, #94c1ee);
    box-shadow: inset 0 0 0 1px #6c9cc9;
  `}
`

const BigLabel = styled.span`
  align-self: stretch;
  margin: 1px 0 3px;
  padding-top: 1px;
  line-height: 11px;
  border-top: 1px solid ${p => p.$split ? '#6c9cc9' : 'transparent'};
`

const CornerCaret = styled.span`
  position: absolute;
  right: 4px;
  bottom: 12px;
`

const Column = styled.div`
  display: flex;
  flex-direction: column;
  align-items: flex-start;
  gap: 2px;
  min-width: ${p => p.$width}px;
  padding: 1px 0 0 1px;
  /* the first column of a panel stands a little clear of its border */
  &:first-child {
    margin-left: 2px;
  }
  &:last-child {
    margin-right: -2px;
  }
`

const SmallTool = styled.button`
  display: flex;
  align-items: center;
  gap: 4px;
  height: 17px;
  padding: 0 3px;
  white-space: nowrap;
  & span + svg {
    margin-left: 2px;
  }
  ${p => p.$active && css`
    background: #a5cdf3;
    box-shadow: inset 0 0 0 1px #6c9cc9;
  `}
`

const BoxStack = styled.div`
  display: flex;
  flex-direction: column;
  gap: 2px;
  padding-top: 1px;
  & + & {
    margin-left: 7px;
  }
`

const BoxRow = styled.div`
  display: flex;
  border: 1px solid #d9d9d9;
`

const BoxTool = styled.button`
  display: flex;
  align-items: center;
  justify-content: center;
  width: 19px;
  height: 15px;
  background: #f6f6f6;
  & + & {
    border-left: 1px solid #e0e0e0;
  }
`

const Main = styled.main`
  display: flex;
  flex: 1;
  border-right: 2px solid #c9c9c9;
`

const Sidebar = styled.aside`
  display: flex;
  flex-direction: column;
  width: 198px;
  padding: 3px 2px 2px;
  background: #f0f0f0;
  border-right: 2px solid #a8a8a8;
  color: #222;
`

const Grip = styled.div`
  display: flex;
  align-items: center;
  gap: 3px;
  height: 9px;
  & span {
    flex: 1;
    height: 3px;
    border: 1px solid #a9a9a9;
    border-left: none;
    background: #fff;
  }
  & button {
    width: 9px;
    font-weight: 700;
    font-size: 11px;
    line-height: 9px;
  }
`

const BrowserHead = styled.div`
  display: flex;
  align-items: center;
  justify-content: space-between;
  height: 16px;
  margin-top: 1px;
  padding: 0 2px 0 7px;
  background: #a2a2a2;
  & button {
    display: flex;
    align-items: center;
    gap: 4px;
    color: #fff;
    font: 700 9px/14px 'Noto Sans', sans-serif;
  }
`

const BrowserTools = styled.div`
  display: flex;
  align-items: center;
  gap: 6px;
  height: 22px;
  padding: 1px 4px 3px;
  & button {
    display: flex;
  }
`

const TreeBox = styled.div`
  flex: 1;
  border: 1px solid #7a7a7a;
  background: #fff;
  font-family: 'DejaVu Sans Condensed', 'DejaVu Sans', sans-serif;
  font-size: 8px;
`

const TreeRows = styled.ul`
  display: grid;
  grid-auto-rows: 1fr;
  height: 102px;
  margin: 0;
  padding: 0;
`

const TreeRow = styled.li`
  display: flex;
  align-items: center;
  gap: 3px;
  padding-left: ${p => p.$root ? 4 : 1}px;
  background: ${p => p.$active ? '#fff' : '#f1f1f1'};
`

const Branch = styled.svg`
  display: block;
  margin-right: -3px;
`

const Canvas = styled.div`
  position: relative;
  flex: 1;
  min-height: 594px;
  overflow: hidden;
  background: linear-gradient(#2b2b2b, #a3a3a3);
`

const Drawing = styled.svg`
  position: absolute;
  inset: 0;
  width: 100%;
  height: 100%;
`

const DimensionInput = styled.input`
  position: absolute;
  left: 500px;
  top: 374px;
  width: 39px;
  height: 15px;
  border: 1px solid #222;
  box-shadow: inset 0 0 0 1px #fff;
  padding: 0 2px;
  background: #0d2468;
  color: #eef;
`

const DocButtons = styled.div`
  position: absolute;
  top: 4px;
  right: 0;
  display: flex;
  gap: 3px;
`

const ViewCube = styled.button`
  position: absolute;
  top: 48px;
  right: 28px;
  width: 43px;
  height: 43px;
  border: 1px solid #8c8c8c;
  background: #7c7c7c;
  color: #5c5c5c;
  font-weight: 700;
  box-shadow: 0 1px 4px #222;
`

const NavBar = styled.div`
  position: absolute;
  top: 117px;
  right: 0;
  width: 28px;
  border: 1px solid #4a4a4a;
  border-radius: 4px;
  background: #808080;
  & hr {
    margin: 0 3px;
    border: none;
    border-top: 1px solid #666;
  }
`

const NavItem = styled.button`
  display: flex;
  align-items: center;
  justify-content: ${p => p.$end ? 'flex-end' : 'center'};
  width: 100%;
  height: ${p => p.$height}px;
  padding-right: ${p => p.$end ? 4 : 0}px;
`

const StatusBar = styled.footer`
  display: flex;
  align-items: center;
  height: 20px;
  margin-bottom: 2px;
  padding-top: 2px;
  background: linear-gradient(#fff, #c4c4c4);
  border-top: 1px solid #ddd;
  color: #222;
  & > span:first-child {
    flex: 0 0 365px;
    padding-left: 1px;
  }
`

const StatusTools = styled.div`
  display: flex;
  flex: 1;
  gap: 6px;
  & button {
    display: flex;
    align-items: center;
    gap: 5px;
  }
`

const Readout = styled.span`
  width: ${p => p.$width}px;
  white-space: nowrap;
`
